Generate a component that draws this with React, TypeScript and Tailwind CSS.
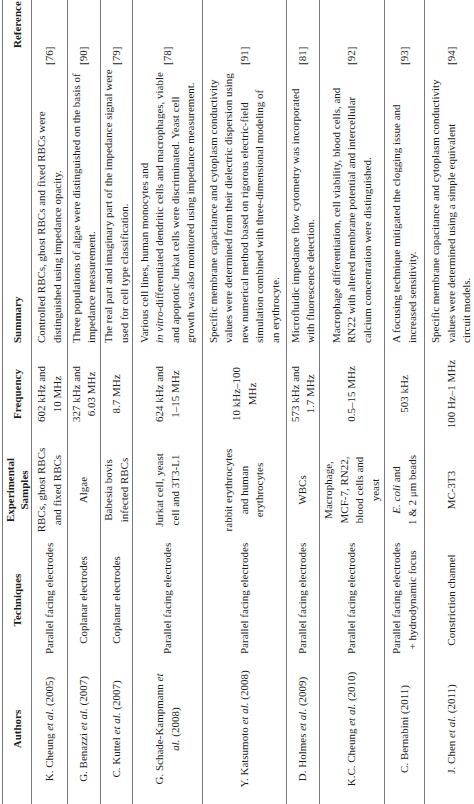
import React from "react";

type Row = {
  h: string;
  authors: React.ReactNode[];
  tech: React.ReactNode[];
  samples: React.ReactNode[];
  freq: React.ReactNode[];
  summary: React.ReactNode[];
  ref: string;
};

const I = ({ children }: { children: React.ReactNode }) => <i>{children}</i>;

const rows: Row[] = [
  {
    h: "h-[36px]",
    authors: [<>K. Cheung <I>et al.</I> (2005)</>],
    tech: ["Parallel facing electrodes"],
    samples: ["RBCs, ghost RBCs", "and fixed RBCs"],
    freq: ["602 kHz and", "10 MHz"],
    summary: ["Controlled RBCs, ghost RBCs and fixed RBCs were", "distinguished using impedance opacity."],
    ref: "[76]",
  },
  {
    h: "h-[33px]",
    authors: [<>G. Benazzi <I>et al.</I> (2007)</>],
    tech: ["Coplanar electrodes"],
    samples: ["Algae"],
    freq: ["327 kHz and", "6.03 MHz"],
    summary: ["Three populations of algae were distinguished on the basis of", "impedance measurement."],
    ref: "[90]",
  },
  {
    h: "h-[32px]",
    authors: [<>C. Kuttel <I>et al.</I> (2007)</>],
    tech: ["Coplanar electrodes"],
    samples: ["Babesia bovis", "infected RBCs"],
    freq: ["8.7 MHz"],
    summary: ["The real part and imaginary part of the impedance signal were", "used for cell type classification."],
    ref: "[79]",
  },
  {
    h: "h-[70px]",
    authors: [<>G. Schade-Kampmann <I>et</I></>, <><I>al.</I> (2008)</>],
    tech: ["Parallel facing electrodes"],
    samples: ["Jurkat cell, yeast", "cell and 3T3-L1"],
    freq: ["624 kHz and", "1–15 MHz"],
    summary: [
      "Various cell lines, human monocytes and",
      <><I>in vitro</I>-differentiated dendritic cells and macrophages, viable</>,
      "and apoptotic Jurkat cells were discriminated. Yeast cell",
      "growth was also monitored using impedance measurement.",
    ],
    ref: "[78]",
  },
  {
    h: "h-[84px]",
    authors: [<>Y. Katsumoto <I>et al.</I> (2008)</>],
    tech: ["Parallel facing electrodes"],
    samples: ["rabbit erythrocytes", "and human", "erythrocytes"],
    freq: ["10 kHz–100", "MHz"],
    summary: [
      "Specific membrane capacitance and cytoplasm conductivity",
      "values were determined from their dielectric dispersion using",
      "new numerical method based on rigorous electric-field",
      "simulation combined with three-dimensional modeling of",
      "an erythrocyte.",
    ],
    ref: "[91]",
  },
  {
    h: "h-[33px]",
    authors: [<>D. Holmes <I>et al.</I> (2009)</>],
    tech: ["Parallel facing electrodes"],
    samples: ["WBCs"],
    freq: ["573 kHz and", "1.7 MHz"],
    summary: ["Microfluidic impedance flow cytometry was incorporated", "with fluorescence detection."],
    ref: "[81]",
  },
  {
    h: "h-[65px]",
    authors: [<>K.C. Cheung <I>et al.</I> (2010)</>],
    tech: ["Parallel facing electrodes"],
    samples: ["Macrophage,", "MCF-7, RN22,", "blood cells and", "yeast"],
    freq: ["0.5–15 MHz"],
    summary: [
      "Macrophage differentiation, cell viability, blood cells, and",
      "RN22 with altered membrane potential and intercellular",
      "calcium concentration were distinguished.",
    ],
    ref: "[92]",
  },
  {
    h: "h-[40px]",
    authors: ["C. Bernabini (2011)"],
    tech: ["Parallel facing electrodes", "+ hydrodynamic focus"],
    samples: [<><I>E. coli</I> and</>, "1 & 2 μm beads"],
    freq: ["503 kHz"],
    summary: ["A focusing technique mitigated the clogging issue and", "increased sensitivity."],
    ref: "[93]",
  },
  {
    h: "h-[54px]",
    authors: [<>J. Chen <I>et al.</I> (2011)</>],
    tech: ["Constriction channel"],
    samples: ["MC-3T3"],
    freq: ["100 Hz–1 MHz"],
    summary: [
      "Specific membrane capacitance and cytoplasm conductivity",
      "values were determined using a simple equivalent",
      "circuit models.",
    ],
    ref: "[94]",
  },
];

const Lines = ({ items }: { items: React.ReactNode[] }) => (
  <>
    {items.map((t, i) => (
      <div key={i} className="whitespace-nowrap">
        {t}
      </div>
    ))}
  </>
);

const grid = "grid grid-cols-[150px_108px_112px_80px_286px_68px]";

export default function App() {
  return (
    <div className="w-[474px] h-[804px] overflow-hidden bg-white">
      <div
        className="w-[804px] h-[474px] origin-top-left -rotate-90 translate-y-[804px] text-[11px] leading-[15.5px] text-[#1c1c1c] bg-white"
        style={{ fontFamily: '"Liberation Serif", "Times New Roman", serif' }}
      >
        <div className="h-[2px]" />
        <div className={`${grid} h-[30px] border-t border-b border-[#7a7a7a] items-center font-bold leading-[14px]`}>
          <div className="text-center">Authors</div>
          <div className="text-center">Techniques</div>
          <div className="text-center">
            <div>Experimental</div>
            <div>Samples</div>
          </div>
          <div className="text-center">Frequency</div>
          <div className="pl-[11px]">Summary</div>
          <div className="pl-[20px] whitespace-nowrap">Reference</div>
        </div>
        {rows.map((r, i) => (
          <div key={i} className={`${grid} ${r.h} border-b border-[#7a7a7a] items-center`}>
            <div className="text-center">
              <Lines items={r.authors} />
            </div>
            <div className="text-center">
              <Lines items={r.tech} />
            </div>
            <div className="text-center">
              <Lines items={r.samples} />
            </div>
            <div className="text-center">
              <Lines items={r.freq} />
            </div>
            <div className="pl-[11px]">
              <Lines items={r.summary} />
            </div>
            <div className="pl-[3px]">{r.ref}</div>
          </div>
        ))}
      </div>
    </div>
  );
}
